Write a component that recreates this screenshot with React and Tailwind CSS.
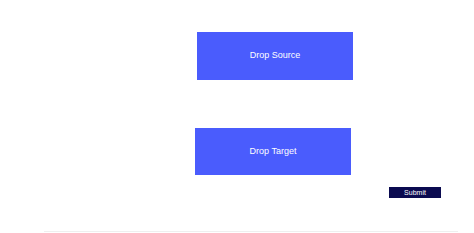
export default function App() {
  return (
    <div className="w-[474px] h-[233px] bg-white overflow-hidden flex flex-col font-['Liberation_Sans',Arial,sans-serif]">
      {/* Source box */}
      <div className="mt-[32px] ml-[197px] w-[156px] h-[48px] bg-[#4a5cfd] flex items-center justify-center text-white text-[9px]">
        Drop Source
      </div>

      {/* Target box */}
      <div className="mt-[48px] ml-[195px] w-[156px] h-[47px] bg-[#4a5cfd] flex items-center justify-center text-white text-[9px]">
        Drop Target
      </div>

      <button
        type="button"
        className="mt-[12px] ml-[389px] w-[52px] h-[11px] bg-[#0b0b50] text-white text-[7px] leading-none flex items-center justify-center"
      >
        Submit
      </button>

      <div className="mt-[33px] ml-[44px] w-[414px] h-px bg-[#efefef]" />
    </div>
  )
}
